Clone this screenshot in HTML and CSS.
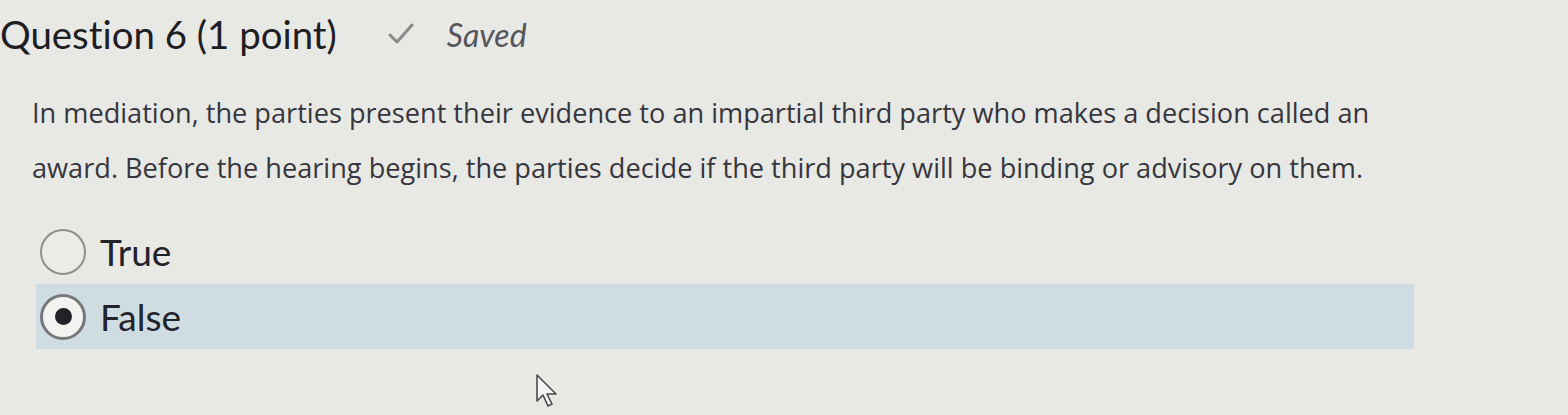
FILE: index.html
```html
<!DOCTYPE html>
<html lang="en">
<head>
  <meta charset="UTF-8" />
  <meta name="viewport" content="width=device-width, initial-scale=1.0" />
  <title>Question 6</title>
  <link rel="stylesheet" href="styles.css">
</head>
<body>
  <div class="question">
    <div class="question-header">
      <h2 class="question-title">Question 6 (1 point)</h2>
      <span class="saved">
        <svg class="check" width="26" height="22" viewBox="0 0 26 22">
          <polyline points="2,12 9,19 24,2" fill="none" stroke="#8a8a8c" stroke-width="3" stroke-linecap="round" stroke-linejoin="round"/>
        </svg>
        <em>Saved</em>
      </span>
    </div>

    <p class="question-text">In mediation, the parties present their evidence to an impartial third party who makes a decision called an award. Before the hearing begins, the parties decide if the third party will be binding or advisory on them.</p>

    <ul class="answers">
      <li class="answer">
        <span class="radio"></span>
        <span class="answer-label">True</span>
      </li>
      <li class="answer selected">
        <span class="radio checked"></span>
        <span class="answer-label">False</span>
      </li>
    </ul>
  </div>

  <!-- puntero del ratón -->
  <svg class="cursor" width="24" height="36" viewBox="0 0 24 36">
    <path d="M2,2 L2,28 L8,22 L13,33 L17,31 L12,21 L21,21 Z" fill="#f4f4f2" stroke="#4a4a4e" stroke-width="1.6" stroke-linejoin="round"/>
  </svg>
</body>
</html>
```

FILE: styles.css
```css
body {
  margin: 0;
  padding: 0;
  background-color: #e8e8e4;
  font-family: Lato, "Open Sans", sans-serif;
  font-variant-ligatures: none;
  color: #2b2b33;
  overflow: hidden;
}

.question {
  width: 1568px;
  height: 415px;
}

.question-header {
  display: flex;
  align-items: center;
  height: 40px;
  margin-top: 14px;
}

.question-title {
  margin: 0;
  font-size: 38.4px;
  font-weight: 400;
  color: #1e1e24;
}

.saved {
  display: flex;
  align-items: center;
  margin-left: 51px;
  color: #55555c;
  font-size: 32px;
}

.saved em {
  margin-left: 33px;
}

.question-text {
  margin: 31px 0 0 0;
  padding-left: 32px;
  width: 1350px;
  font-family: "Open Sans", sans-serif;
  font-size: 27.15px;
  line-height: 55px;
  color: #36363e;
}

.answers {
  list-style: none;
  margin: 24px 0 0 0;
  padding: 0;
}

.answer {
  display: flex;
  align-items: center;
  height: 65px;
  width: 1378px;
  margin-left: 36px;
}

.answer.selected {
  background-color: #cfdde3;
}

.radio {
  box-sizing: border-box;
  width: 46px;
  height: 46px;
  margin-left: 4px;
  border: 2px solid #8e8e90;
  border-radius: 50%;
  background-color: #ebebe8;
  display: flex;
  align-items: center;
  justify-content: center;
}

.radio.checked {
  border: 3px solid #77777a;
  background-color: #f2f2f0;
}

.radio.checked::after {
  content: "";
  width: 17px;
  height: 17px;
  border-radius: 50%;
  background-color: #222226;
}

.answer-label {
  margin-left: 14px;
  font-size: 37px;
  color: #22222a;
}

.cursor {
  position: absolute;
  left: 535px;
  top: 373px;
}
```
